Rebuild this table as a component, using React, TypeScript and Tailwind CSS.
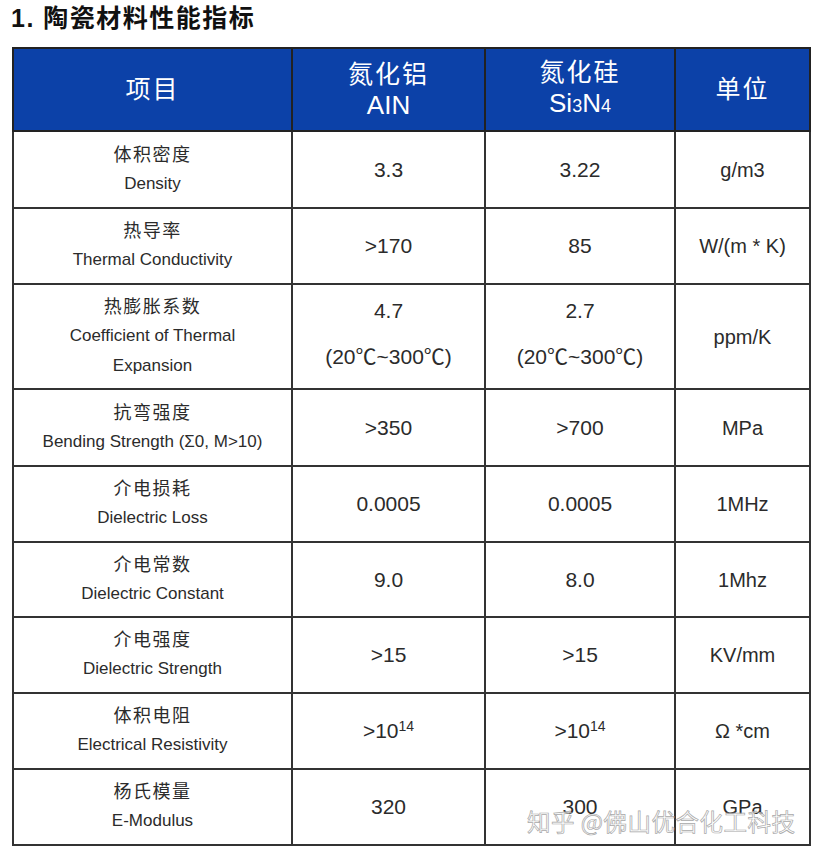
import React from "react";

type Row = {
  zh: string;
  en: string[];
  aln: React.ReactNode;
  si: React.ReactNode;
  unit: string;
  h: string;
};

const sup14 = (
  <>
    &gt;10<sup className="text-[14px] -top-[7px]">14</sup>
  </>
);

const rows: Row[] = [
  { zh: "体积密度", en: ["Density"], aln: "3.3", si: "3.22", unit: "g/m3", h: "h-[77px]" },
  { zh: "热导率", en: ["Thermal Conductivity"], aln: ">170", si: "85", unit: "W/(m * K)", h: "h-[76px]" },
  {
    zh: "热膨胀系数",
    en: ["Coefficient of Thermal", "Expansion"],
    aln: "4.7|(20℃~300℃)",
    si: "2.7|(20℃~300℃)",
    unit: "ppm/K",
    h: "h-[105px]",
  },
  { zh: "抗弯强度", en: ["Bending Strength (Σ0, M>10)"], aln: ">350", si: ">700", unit: "MPa", h: "h-[77px]" },
  { zh: "介电损耗", en: ["Dielectric Loss"], aln: "0.0005", si: "0.0005", unit: "1MHz", h: "h-[76px]" },
  { zh: "介电常数", en: ["Dielectric Constant"], aln: "9.0", si: "8.0", unit: "1Mhz", h: "h-[75px]" },
  { zh: "介电强度", en: ["Dielectric Strength"], aln: ">15", si: ">15", unit: "KV/mm", h: "h-[76px]" },
  { zh: "体积电阻", en: ["Electrical Resistivity"], aln: sup14, si: sup14, unit: "Ω *cm", h: "h-[76px]" },
  { zh: "杨氏模量", en: ["E-Modulus"], aln: "320", si: "300", unit: "GPa", h: "h-[76px]" },
];

const font = "font-['Liberation_Sans','Noto_Sans_CJK_SC',sans-serif]";

function Value({ v }: { v: React.ReactNode }) {
  if (typeof v === "string" && v.includes("|")) {
    const [a, b] = v.split("|");
    return (
      <div className="flex flex-col items-center gap-[20px] leading-[26px] pb-[6px]">
        <span>{a}</span>
        <span>{b}</span>
      </div>
    );
  }
  return <span>{v}</span>;
}

export default function App() {
  return (
    <div className={`relative w-[821px] h-[853px] bg-white ${font} text-[#2b2b2b]`}>
      <h1 className="pl-[11px] pt-[3px] h-[47px] text-[25px] font-bold text-[#111] leading-[30px] tracking-[1.5px]">
        1. 陶瓷材料性能指标
      </h1>
      <table className="ml-[12px] w-[797px] table-fixed border-collapse border-2 border-[#333]">
        <colgroup>
          <col className="w-[279px]" />
          <col className="w-[193px]" />
          <col className="w-[190px]" />
          <col className="w-[135px]" />
        </colgroup>
        <thead>
          <tr className="h-[83px] bg-[#0c41a8] text-white">
            <th className="border-2 border-[#222] font-normal text-[25px] tracking-[2px]">项目</th>
            <th className="border-2 border-[#222] font-normal text-[25px] leading-[31px]">
              <div className="tracking-[2px]">氮化铝</div>
              <div className="text-[26px]">AIN</div>
            </th>
            <th className="border-2 border-[#222] font-normal text-[25px] leading-[31px]">
              <div className="tracking-[2px]">氮化硅</div>
              <div className="text-[26px]">
                Si<span className="text-[18px]">3</span>N<span className="text-[18px]">4</span>
              </div>
            </th>
            <th className="border-2 border-[#222] font-normal text-[25px] tracking-[2px]">单位</th>
          </tr>
        </thead>
        <tbody>
          {rows.map((r) => (
            <tr key={r.zh} className={r.h}>
              <td className="border-2 border-[#333] text-center">
                <div className="text-[18px] leading-[28px] tracking-[1.5px]">{r.zh}</div>
                {r.en.map((e) => (
                  <div key={e} className="text-[17px] leading-[30px]">
                    {e}
                  </div>
                ))}
              </td>
              <td className="border-2 border-[#333] text-center text-[21px]">
                <Value v={r.aln} />
              </td>
              <td className="border-2 border-[#333] text-center text-[21px]">
                <Value v={r.si} />
              </td>
              <td className="border-2 border-[#333] text-center text-[20px]">{r.unit}</td>
            </tr>
          ))}
        </tbody>
      </table>
      <div className="absolute left-[527px] top-[805px] text-[23.5px] leading-[32px] tracking-[0.5px] text-white/60 [-webkit-text-stroke:0.7px_#a8a8a8] font-['Noto_Sans_CJK_SC',sans-serif]">
        知乎 @佛山优合化工科技
      </div>
    </div>
  );
}
